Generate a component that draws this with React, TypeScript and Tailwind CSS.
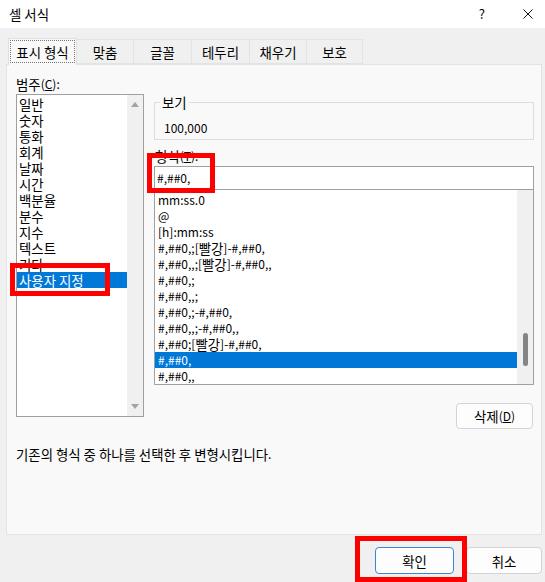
import React from 'react';

const categories = ['일반', '숫자', '통화', '회계', '날짜', '시간', '백분율', '분수', '지수', '텍스트', '기타', '사용자 지정'];

const formats = [
  'mm:ss.0',
  '@',
  '[h]:mm:ss',
  '#,##0,;[빨강]-#,##0,',
  '#,##0,,;[빨강]-#,##0,,',
  '#,##0,;',
  '#,##0,,;',
  '#,##0,;-#,##0,',
  '#,##0,,;-#,##0,,',
  '#,##0;[빨강]-#,##0,',
  '#,##0,',
  '#,##0,,',
];

const tabs = [
  { label: '맞춤', w: 'w-[57px]' },
  { label: '글꼴', w: 'w-[58px]' },
  { label: '테두리', w: 'w-[58px]' },
  { label: '채우기', w: 'w-[57px]' },
  { label: '보호', w: 'w-[56px]' },
];

// 한글 글자는 맑은 고딕처럼 조금 넓게 보이도록 크게 찍는다
function K({ s }: { s: string }) {
  return (
    <span>
      {s.split(/([\uAC00-\uD7A3][\uAC00-\uD7A3 ]*)/).map((p, i) =>
        /[\uAC00-\uD7A3]/.test(p) ? (
          <span key={i} className="text-[13.4px] leading-[16px] align-top">
            {p}
          </span>
        ) : (
          p
        )
      )}
    </span>
  );
}

function Arrow({ down }: { down?: boolean }) {
  return (
    <svg width="8" height="5" viewBox="0 0 8 5" className="mx-auto">
      <path d={down ? 'M0 0 L8 0 L4 5 Z' : 'M0 5 L8 5 L4 0 Z'} fill="#a3a3a3" />
    </svg>
  );
}

export default function App() {
  const selectedCategory = '사용자 지정';
  const selectedFormat = 10;

  return (
    <div className="relative w-[545px] h-[582px] overflow-hidden bg-[#f0f0f0] text-[12px] leading-[16px] text-black font-['Noto_Sans_CJK_KR',sans-serif]">
      {/* 타이틀 바 */}
      <div className="h-[28px] bg-white flex items-center pl-[9px] pr-[12px]">
        <K s="셀 서식" />
        <span className="ml-auto text-[13px]">?</span>
        <svg width="10" height="10" viewBox="0 0 10 10" className="ml-[38px]">
          <path d="M0.5 0.5 L9.5 9.5 M9.5 0.5 L0.5 9.5" stroke="#111" strokeWidth="1" />
        </svg>
      </div>

      {/* 탭 */}
      <div className="flex items-end h-[27px] mt-[9px] ml-[8px]">
        <div className="relative w-[69px] h-[27px] -mb-px bg-[#f9f9f9] border border-b-0 border-[#e0e0e0] z-10">
          <div className="absolute left-[1px] right-[1px] top-[1px] bottom-[2px] border border-dotted border-[#777] flex items-center justify-center">
            <K s="표시 형식" />
          </div>
        </div>
        {tabs.map((t) => (
          <div
            key={t.label}
            className={`${t.w} h-[25px] flex items-center justify-center bg-[#f0f0f0] border border-l-0 border-[#e3e3e3]`}
          >
            <K s={t.label} />
          </div>
        ))}
      </div>

      {/* 탭 패널 */}
      <div className="ml-[6px] w-[536px] h-[471px] bg-[#f9f9f9] border border-[#e3e3e3] flex flex-col">
        <div className="flex pl-[9px]">
          {/* 범주 */}
          <div className="pt-[11px] w-[128px]">
            <div>
              <K s="범주" />(<span className="underline">C</span>):
            </div>
            <div className="mt-[2px] h-[323px] bg-white border border-[#a0a0a0] flex">
              <div className="flex-1 pt-[1px]">
                {categories.map((c) => (
                  <div
                    key={c}
                    className={`h-[16px] pl-[2px] whitespace-nowrap ${c === selectedCategory ? 'bg-[#0078d7] text-white' : ''}`}
                  >
                    <K s={c} />
                  </div>
                ))}
              </div>
              <div className="w-[16px] bg-[#f0f0f0] flex flex-col justify-between py-[7px]">
                <Arrow />
                <Arrow down />
              </div>
            </div>
          </div>

          {/* 오른쪽 */}
          <div className="ml-[10px] w-[380px] pt-[29px] flex flex-col">
            <fieldset className="h-[46px] border border-[#dcdcdc] px-0">
              <legend className="ml-[5px] px-[2px]">
                <K s="보기" />
              </legend>
              <div className="mt-[10px] pl-[9px]">100,000</div>
            </fieldset>

            <div className="mt-[8px] pl-[1px]">
              <K s="형식" />(<span className="underline">T</span>):
            </div>
            <div className="mt-[2px] h-[24px] bg-white border border-[#a0a0a0] flex items-center pl-[2px]">
              #,##0,
            </div>
            <div className="h-[195px] bg-white border border-t-0 border-[#a0a0a0] flex">
              <div className="flex-1 pt-[2px]">
                {formats.map((f, i) => (
                  <div
                    key={f + i}
                    className={`h-[16px] pl-[3px] whitespace-nowrap ${i === selectedFormat ? 'bg-[#0078d7] text-white' : ''}`}
                  >
                    <K s={f} />
                  </div>
                ))}
              </div>
              <div className="w-[16px] bg-[#f0f0f0] flex justify-center">
                <div className="mt-[143px] w-[5px] h-[33px] rounded-[3px] bg-[#858585]" />
              </div>
            </div>

            <div className="mt-[18px] mr-[1px] self-end">
              <button className="w-[77px] h-[26px] rounded-[4px] bg-[#fdfdfd] border border-[#d3d3d3]">
                <K s="삭제" />(<span className="underline">D</span>)
              </button>
            </div>
          </div>
        </div>

        <div className="mt-[17px] pl-[9px]">
          <K s="기존의 형식 중 하나를 선택한 후 변형시킵니다." />
        </div>
      </div>

      {/* 하단 버튼 */}
      <div className="mt-[12px] flex justify-end pr-[3px] gap-[12px]">
        <button className="w-[79px] h-[27px] rounded-[4px] bg-[#fdfdfd] border border-[#3b86d6]">
          <K s="확인" />
        </button>
        <button className="w-[76px] h-[27px] rounded-[4px] bg-[#fdfdfd] border border-[#d3d3d3]">
          <K s="취소" />
        </button>
      </div>

      {/* 강조 표시 */}
      <div className="absolute left-[10px] top-[263px] w-[100px] h-[33px] border-[5px] border-[#ff0000]" />
      <div className="absolute left-[147px] top-[153px] w-[68px] h-[40px] border-[5px] border-[#ff0000]" />
      <div className="absolute left-[355px] top-[536px] w-[112px] h-[46px] border-[5px] border-[#ff0000]" />
    </div>
  );
}
